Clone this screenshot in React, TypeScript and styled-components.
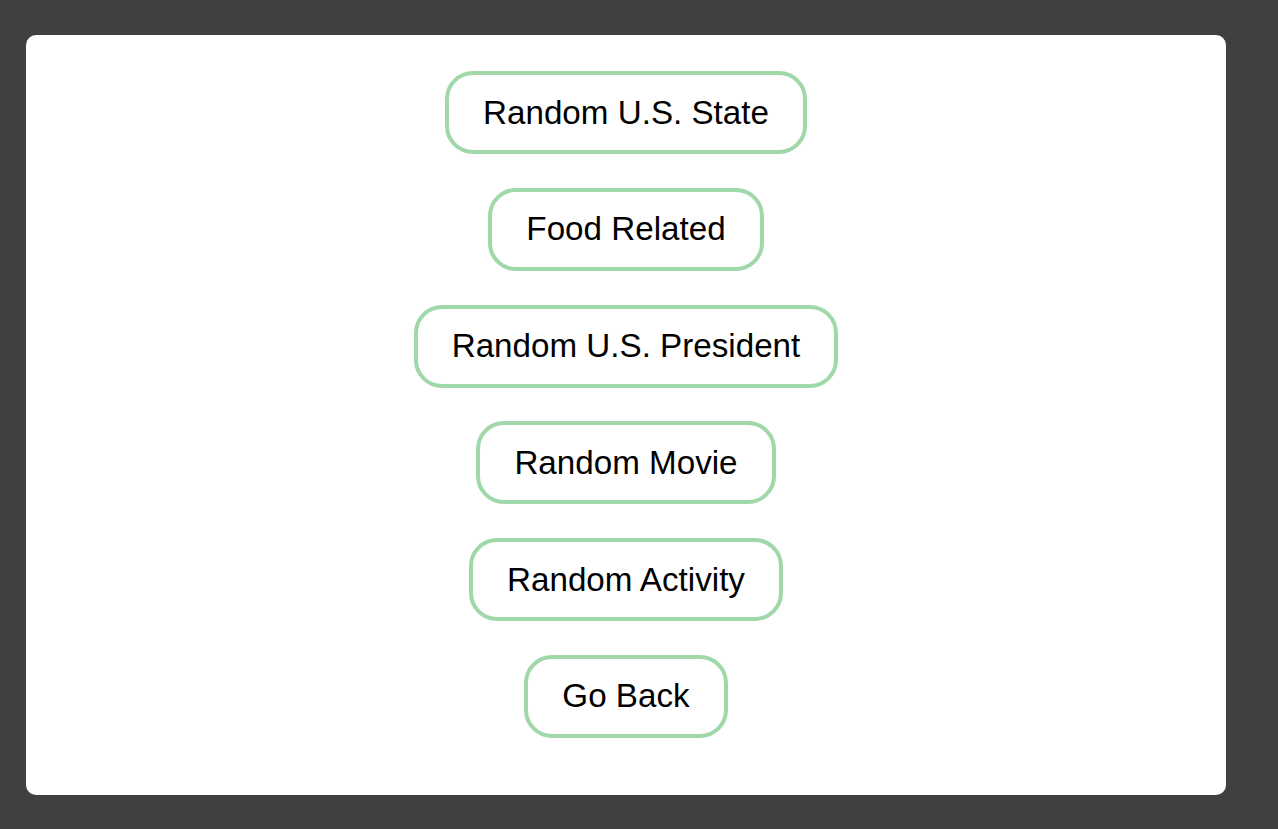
import React from 'react';
import styled, { createGlobalStyle } from 'styled-components';

const GlobalStyle = createGlobalStyle`
  html, body {
    margin: 0;
    padding: 0;
    background-color: #404040;
    font-family: 'Liberation Sans', Arial, sans-serif;
  }
`;

const Page = styled.div`
  padding: 35px 0 34px 26px;
`;

const Card = styled.div`
  width: 1200px;
  height: 760px;
  box-sizing: border-box;
  background-color: #ffffff;
  border-radius: 10px;
  padding-top: 36px;
  display: flex;
  flex-direction: column;
  align-items: center;
  gap: 33.8px;
`;

const OptionButton = styled.button`
  box-sizing: border-box;
  height: 83px;
  padding: 0 34px;
  border: 4px solid #a0d8aa;
  border-radius: 28px;
  background-color: #ffffff;
  color: #000000;
  font-family: 'Liberation Sans', Arial, sans-serif;
  font-size: 33.2px;
  cursor: pointer;
`;

const options: string[] = [
  'Random U.S. State',
  'Food Related',
  'Random U.S. President',
  'Random Movie',
  'Random Activity',
  'Go Back',
];

const App = () => {
  return (
    <Page>
      <GlobalStyle />
      <Card>
        {options.map((label, index) => (
          <OptionButton key={`${label}-${index}`}>{label}</OptionButton>
        ))}
      </Card>
    </Page>
  );
};

export default App;
